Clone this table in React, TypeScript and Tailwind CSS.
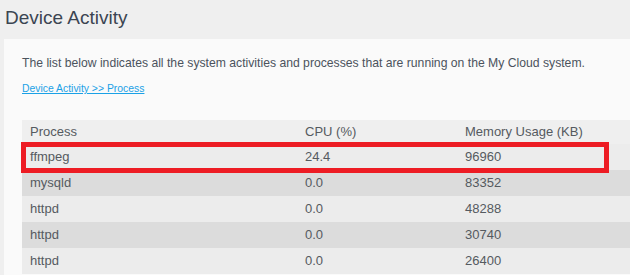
import React from "react";

type Proc = { name: string; cpu: string; mem: string };

const rows: Proc[] = [
  { name: "ffmpeg", cpu: "24.4", mem: "96960" },
  { name: "mysqld", cpu: "0.0", mem: "83352" },
  { name: "httpd", cpu: "0.0", mem: "48288" },
  { name: "httpd", cpu: "0.0", mem: "30740" },
  { name: "httpd", cpu: "0.0", mem: "26400" },
];

export default function App() {
  return (
    <div
      className="w-[630px] h-[275px] overflow-hidden bg-[#efefef]"
      style={{ fontFamily: '"Liberation Sans", Arial, sans-serif' }}
    >
      <h1 className="pl-[5px] pt-[6px] h-[39px] text-[19px] leading-[24px] text-[#3b4552]">
        Device Activity
      </h1>
      <div className="ml-[4px] w-[700px] h-[260px] bg-[#fafafa] pl-[18px] pt-[15px]">
        <p className="text-[12.2px] leading-[18px] text-[#4b535d]">
          The list below indicates all the system activities and processes that are running on the My Cloud system.
        </p>
        <a
          href="#"
          className="mt-[10px] block w-fit text-[10.4px] leading-[14px] text-[#1aa1e6] underline"
        >
          Device Activity &gt;&gt; Process
        </a>
        <div className="relative mt-[24px] w-[680px] text-[13px] leading-[16px] text-[#555a60]">
          <div className="flex h-[24px] items-center bg-[#efefef]">
            <div className="w-[275px] pl-[8px]">Process</div>
            <div className="w-[160px] pl-[8px]">CPU (%)</div>
            <div className="pl-[8px]">Memory Usage (KB)</div>
          </div>
          {rows.map((r, i) => (
            <div
              key={i}
              className={
                "flex h-[26px] items-center " +
                (i % 2 === 0 ? "bg-[#ececec]" : "bg-[#dcdcdc]")
              }
            >
              <div className="w-[275px] pl-[8px]">{r.name}</div>
              <div className="w-[160px] pl-[8px]">{r.cpu}</div>
              <div className="pl-[8px]">{r.mem}</div>
            </div>
          ))}
          {/* highlight frame around the top process */}
          <div className="pointer-events-none absolute left-[-1px] top-[22px] h-[31px] w-[588px] border-[5px] border-[#ed1c24]" />
        </div>
      </div>
    </div>
  );
}
